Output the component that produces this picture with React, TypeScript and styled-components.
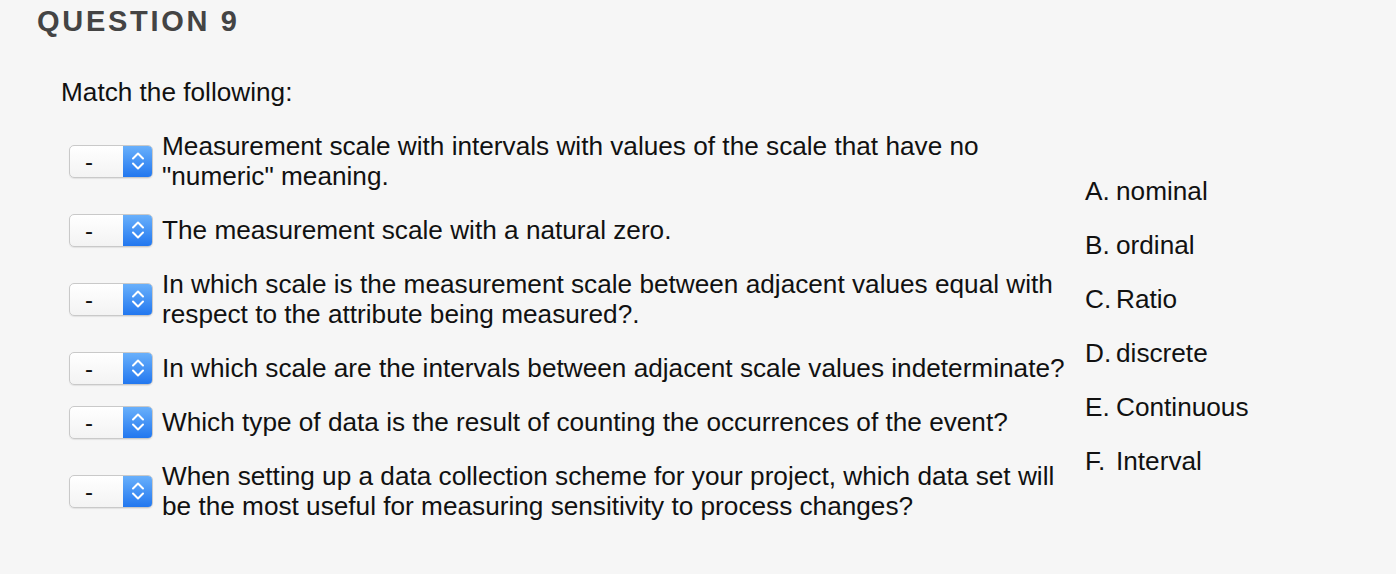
import { createGlobalStyle, styled } from "styled-components";

const GlobalStyle = createGlobalStyle`
  html, body {
    margin: 0;
    padding: 0;
    background-color: #f6f6f6;
  }
  body {
    font-family: "Liberation Sans", Arial, Helvetica, sans-serif;
    color: #111;
  }
`;

const Page = styled.div`
  width: 1396px;
  height: 574px;
  padding: 5px 0 0 37px;
  box-sizing: border-box;
  background-color: #f6f6f6;
`;

const Title = styled.h2`
  margin: 0;
  font-size: 29px;
  line-height: 32px;
  font-weight: 700;
  letter-spacing: 2.7px;
  color: #444;
`;

const Body = styled.div`
  padding-left: 24px;
  margin-top: 40px;
  font-size: 26.2px;
  line-height: 30px;
`;

const Prompt = styled.p`
  margin: 0 0 24px;
`;

const Matching = styled.div`
  display: flex;
  align-items: flex-start;
`;

const Questions = styled.div`
  display: flex;
  flex-direction: column;
  gap: 24px;
  padding-left: 8px;
`;

const Row = styled.div`
  display: flex;
  align-items: center;
  gap: 9px;
`;

const Select = styled.div`
  display: flex;
  width: 84px;
  height: 33px;
  margin: -2px 0;
  flex-shrink: 0;
  box-sizing: border-box;
  border: 1px solid #c9c9c9;
  border-radius: 5px;
  overflow: hidden;
  background: linear-gradient(#ffffff, #f3f3f3);
  box-shadow: 0 1px 1px rgba(0, 0, 0, 0.08);
`;

const SelectValue = styled.span`
  flex: 1;
  padding-left: 15px;
  font-size: 24px;
  line-height: 31px;
`;

const SelectArrow = styled.span`
  width: 29px;
  display: flex;
  align-items: center;
  justify-content: center;
  background: linear-gradient(#69b0fb, #2277ef);
`;

const QuestionText = styled.div`
  width: 906px;
`;

const Answers = styled.ol`
  list-style: none;
  margin: 45px 0 0 17px;
  padding: 0;
  display: flex;
  flex-direction: column;
  gap: 24px;
`;

const Answer = styled.li`
  display: grid;
  grid-template-columns: 31px auto;
`;

const questions: string[][] = [
  ["Measurement scale with intervals with values of the scale that have no", "\"numeric\" meaning."],
  ["The measurement scale with a natural zero."],
  ["In which scale is the measurement scale between adjacent values equal with", "respect to the attribute being measured?."],
  ["In which scale are the intervals between adjacent scale values indeterminate?"],
  ["Which type of data is the result of counting the occurrences of the event?"],
  ["When setting up a data collection scheme for your project, which data set will", "be the most useful for measuring sensitivity to process changes?"],
];

const answers = [
  ["A.", "nominal"],
  ["B.", "ordinal"],
  ["C.", "Ratio"],
  ["D.", "discrete"],
  ["E.", "Continuous"],
  ["F.", "Interval"],
];

const Chevrons = () => (
  <svg width="16" height="24" viewBox="0 0 16 24" fill="none" stroke="#fff" strokeWidth="2" strokeLinecap="round" strokeLinejoin="round">
    <path d="M3 9.5 L8 4.5 L13 9.5" />
    <path d="M3 14.5 L8 19.5 L13 14.5" />
  </svg>
);

const App = () => {
  return (
    <Page>
      <GlobalStyle />
      <Title>QUESTION 9</Title>
      <Body>
        <Prompt>Match the following:</Prompt>
        <Matching>
          <Questions>
            {questions.map((lines, i) => (
              <Row key={i}>
                <Select>
                  <SelectValue>-</SelectValue>
                  <SelectArrow>
                    <Chevrons />
                  </SelectArrow>
                </Select>
                <QuestionText>
                  {lines.map((line, j) => (
                    <span key={j}>
                      {j > 0 && <br />}
                      {line}
                    </span>
                  ))}
                </QuestionText>
              </Row>
            ))}
          </Questions>
          <Answers>
            {answers.map(([letter, text]) => (
              <Answer key={letter}>
                <span>{letter}</span>
                <span>{text}</span>
              </Answer>
            ))}
          </Answers>
        </Matching>
      </Body>
    </Page>
  );
};

export default App;
